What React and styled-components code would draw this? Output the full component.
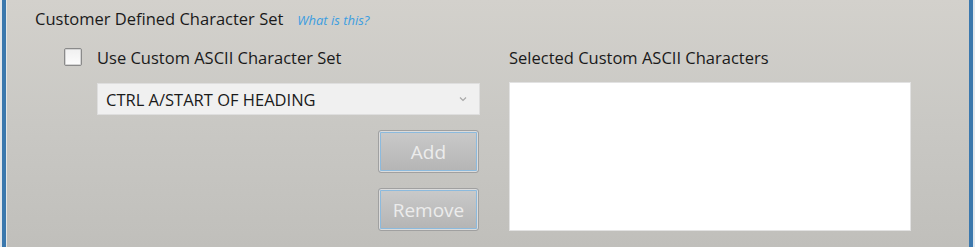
import React from "react";
import styled, { createGlobalStyle } from "styled-components";

const Global = createGlobalStyle`
  html, body { margin: 0; padding: 0; }
  body { width: 975px; height: 247px; overflow: hidden; font-family: "Open Sans", "Noto Sans", sans-serif; }
`;

const Frame = styled.div`
  box-sizing: border-box;
  width: 975px;
  height: 247px;
  background: #e2e7ec;
  padding: 0 2px;
`;

const Panel = styled.div`
  box-sizing: border-box;
  height: 100%;
  border-left: 4px solid #3b78ad;
  border-right: 4px solid #3b78ad;
  background: linear-gradient(to bottom, #d3d1cc 0%, #c9c8c4 50%, #c0bfbb 100%);
  box-shadow: inset 1px 0 0 #e4e6e6;
  padding: 8px 0 0 29px;
`;

const TitleRow = styled.div`
  display: flex;
  align-items: center;
  gap: 14px;
  height: 22px;
`;

const Title = styled.span`
  font-size: 16.5px;
  line-height: 22px;
  color: #1a1a1a;
`;

const Help = styled.span`
  font-size: 13px;
  line-height: 22px;
  font-style: italic;
  color: #3d9ee0;
  padding-top: 1px;
`;

const Body = styled.div`
  display: grid;
  grid-template-columns: 450px 402px;
  column-gap: 24px;
  margin-top: 17px;
`;

const LeftCol = styled.div`
  display: flex;
  flex-direction: column;
  padding-left: 29px;
`;

const CheckRow = styled.label`
  display: flex;
  align-items: center;
  gap: 15px;
  height: 20px;
  font-size: 16.5px;
  color: #1a1a1a;
`;

const Box = styled.span`
  box-sizing: border-box;
  width: 18px;
  height: 18px;
  border: 1px solid #8a8a8a;
  border-radius: 2px;
  background: linear-gradient(to bottom, #f0f0f0, #fcfcfc);
  box-shadow: inset 0 0 0 1px #d4d4d4;
`;

const Select = styled.div`
  box-sizing: border-box;
  margin: 16px 0 0 33px;
  width: 383px;
  height: 32px;
  background: #f0f0f0;
  border: 1px solid #dedede;
  display: flex;
  align-items: center;
  justify-content: space-between;
  padding: 0 12px 0 8px;
  font-size: 16.5px;
  color: #1a1a1a;
`;

const Chevron = styled.svg`
  width: 8px;
  height: 6px;
`;

const Buttons = styled.div`
  display: flex;
  flex-direction: column;
  align-items: flex-end;
  gap: 15px;
  margin-top: 15px;
  width: 415px;
`;

const Button = styled.button`
  box-sizing: border-box;
  width: 101px;
  height: 43px;
  border: 1px solid #a0a0a0;
  border-radius: 3px;
  background: linear-gradient(to bottom, #cacaca, #b4b4b4);
  box-shadow: inset 0 0 0 1px #dcdcdc, inset 0 0 0 2px #8cbadd;
  color: #ececec;
  font-family: inherit;
  font-size: 19px;
  padding: 0;
`;

const RightCol = styled.div`
  display: flex;
  flex-direction: column;
`;

const Label = styled.div`
  font-size: 16.5px;
  color: #1a1a1a;
  height: 20px;
  display: flex;
  align-items: center;
`;

const ListBox = styled.div`
  box-sizing: border-box;
  margin-top: 15px;
  width: 402px;
  height: 149px;
  background: #ffffff;
  border: 1px solid #e2e2e2;
`;

export default function App() {
  return (
    <>
      <Global />
      <Frame>
        <Panel>
          <TitleRow>
            <Title>Customer Defined Character Set</Title>
            <Help>What is this?</Help>
          </TitleRow>
          <Body>
            <LeftCol>
              <CheckRow>
                <Box />
                Use Custom ASCII Character Set
              </CheckRow>
              <Select>
                <span>CTRL A/START OF HEADING</span>
                <Chevron viewBox="0 0 8 6">
                  <path d="M1 1.5 L4 4.5 L7 1.5" fill="none" stroke="#a8a8a8" strokeWidth="1.2" />
                </Chevron>
              </Select>
              <Buttons>
                <Button disabled>Add</Button>
                <Button disabled>Remove</Button>
              </Buttons>
            </LeftCol>
            <RightCol>
              <Label>Selected Custom ASCII Characters</Label>
              <ListBox />
            </RightCol>
          </Body>
        </Panel>
      </Frame>
    </>
  );
}
